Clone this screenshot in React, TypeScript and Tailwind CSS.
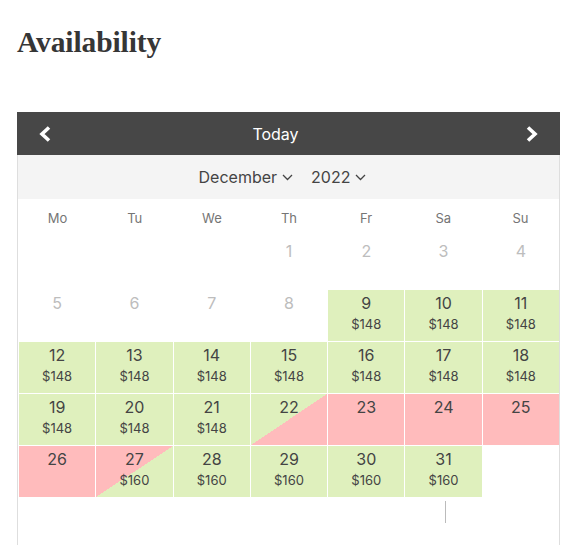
import React from "react";

type Day = {
  n: number;
  kind: "past" | "green" | "pink" | "gp" | "pg" | "empty";
  price?: string;
};

function buildDays(): Day[] {
  const days: Day[] = [];
  for (let i = 0; i < 3; i++) days.push({ n: 0, kind: "empty" });
  for (let d = 1; d <= 31; d++) {
    if (d <= 8) days.push({ n: d, kind: "past" });
    else if (d <= 21) days.push({ n: d, kind: "green", price: "$148" });
    else if (d === 22) days.push({ n: d, kind: "gp" });
    else if (d <= 26) days.push({ n: d, kind: "pink" });
    else if (d === 27) days.push({ n: d, kind: "pg", price: "$160" });
    else days.push({ n: d, kind: "green", price: "$160" });
  }
  days.push({ n: 0, kind: "empty" });
  return days;
}

function Chevron({ dir }: { dir: "left" | "right" }) {
  return (
    <svg width="14" height="18" viewBox="0 0 14 18" className="block">
      <polyline
        points={dir === "left" ? "11,2.5 4,9 11,15.5" : "3,2.5 10,9 3,15.5"}
        fill="none"
        stroke="#ffffff"
        strokeWidth="3.6"
        strokeLinecap="butt"
        strokeLinejoin="miter"
      />
    </svg>
  );
}

function SmallDown() {
  return (
    <svg width="11" height="7" viewBox="0 0 11 7" className="block">
      <polyline points="1,1 5.5,5.5 10,1" fill="none" stroke="#444" strokeWidth="1.3" />
    </svg>
  );
}

export default function App() {
  const days = buildDays();
  const weekdays = ["Mo", "Tu", "We", "Th", "Fr", "Sa", "Su"];
  return (
    <div className="w-[575px] h-[545px] overflow-hidden bg-white pl-[17px] pt-[24px] font-['Inter',sans-serif]">
      <h2 className="h-[36px] text-[29.5px] leading-[36px] font-bold text-[#363636] font-['Liberation_Serif',serif] tracking-[-0.1px]">
        Availability
      </h2>
      <div className="mt-[52px] w-[543px]">
        <div className="h-[43px] bg-[#474747] flex items-center justify-between pl-[21px] pr-[21px]">
          <Chevron dir="left" />
          <span className="text-white text-[16px] leading-none mr-[26px]">Today</span>
          <Chevron dir="right" />
        </div>
        <div className="relative border-x border-[#dedede] pb-[80px]">
          <div className="h-[44px] bg-[#f4f4f4] flex items-center justify-center gap-[18px] text-[#444] text-[16px] pr-[12px]">
            <span className="flex items-center gap-[5px]">
              December <SmallDown />
            </span>
            <span className="flex items-center gap-[5px]">
              2022 <SmallDown />
            </span>
          </div>
          <div className="h-[38px] grid grid-cols-7 items-center pl-px pt-[2px] text-[13px] text-[#757575]">
            {weekdays.map((w) => (
              <div key={w} className="text-center">
                {w}
              </div>
            ))}
          </div>
          <div className="grid grid-cols-7 gap-px pl-px pt-px">
            {days.map((d, i) => {
              let bg = "";
              if (d.kind === "green") bg = "bg-[#dff0bd]";
              else if (d.kind === "pink") bg = "bg-[#ffbbbc]";
              else if (d.kind === "gp")
                bg = "bg-[linear-gradient(to_bottom_right,#dff0bd_50%,#ffbbbc_50%)]";
              else if (d.kind === "pg")
                bg = "bg-[linear-gradient(to_bottom_right,#ffbbbc_50%,#dff0bd_50%)]";
              return (
                <div key={i} className={`h-[51px] pt-[2px] text-center ${bg}`}>
                  {d.kind !== "empty" && (
                    <>
                      <div
                        className={`text-[16px] leading-[22px] ${
                          d.kind === "past" ? "text-[#bdbdbd]" : "text-[#444]"
                        }`}
                      >
                        {d.n}
                      </div>
                      {d.price && (
                        <div className="text-[13px] leading-[20px] text-[#444]">{d.price}</div>
                      )}
                    </>
                  )}
                </div>
              );
            })}
          </div>
          <div className="absolute left-[427px] top-[346px] w-px h-[22px] bg-[#bbbbbb]" />
        </div>
      </div>
    </div>
  );
}
